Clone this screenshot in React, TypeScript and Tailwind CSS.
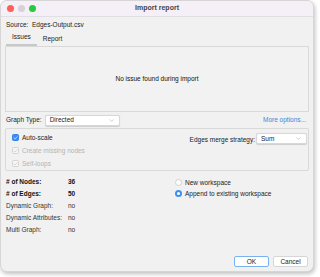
import { ChevronDown, Check } from "lucide-react"

const font = "font-['Helvetica','Liberation_Sans',Arial,sans-serif]"

const Select = ({ value, className }: { value: string; className: string }) => (
  <div className={`flex items-center justify-between bg-white rounded-[2px] border border-[#d8d8d8] shadow-[0_0.5px_1px_rgba(0,0,0,0.15)] pl-[4px] pr-[4px] ${className}`}>
    <span className="text-[6.5px] text-[#222]">{value}</span>
    <ChevronDown size={7} strokeWidth={1.6} className="text-[#9a9a9a]" />
  </div>
)

const CheckRow = ({ label, checked, disabled }: { label: string; checked?: boolean; disabled?: boolean }) => (
  <div className="flex items-center gap-[3px] h-[13px]">
    <div
      className={`w-[7px] h-[7px] rounded-[1.5px] flex items-center justify-center ${
        disabled ? "border border-[#d4d4d4] bg-[#f6f6f6]" : "bg-[#3d8ef7] border border-[#3584ea]"
      }`}
    >
      {checked && <Check size={6} strokeWidth={3} className={disabled ? "text-[#c0c0c0]" : "text-white"} />}
    </div>
    <span className={`text-[6.5px] ${disabled ? "text-[#b4b4b4]" : "text-[#222]"}`}>{label}</span>
  </div>
)

const Radio = ({ label, selected }: { label: string; selected?: boolean }) => (
  <div className="flex items-center gap-[3px] h-[11px]">
    <div
      className={`w-[7px] h-[7px] rounded-full flex items-center justify-center ${
        selected ? "bg-[#3d8ef7]" : "bg-white border border-[#cfcfcf]"
      }`}
    >
      {selected && <div className="w-[2.5px] h-[2.5px] rounded-full bg-white" />}
    </div>
    <span className="text-[6.5px] text-[#222]">{label}</span>
  </div>
)

const Stat = ({ label, value, bold }: { label: string; value: string; bold?: boolean }) => (
  <div className={`flex items-center h-[12px] text-[6.5px] ${bold ? "font-bold text-[#111]" : "text-[#333]"}`}>
    <span className="w-[62px]">{label}</span>
    <span>{value}</span>
  </div>
)

export default function App() {
  return (
    <div className={`w-[320px] h-[277px] bg-white overflow-hidden ${font}`}>
      <div className="w-[314px] h-[272px] rounded-[7px] bg-[#f1f1f1] border border-[#d6d6d6] shadow-[1px_2px_4px_rgba(0,0,0,0.25)] overflow-hidden flex flex-col">
        {/* title bar */}
        <div className="relative h-[16px] bg-[#f5eff7] border-b border-[#e2dfe3] flex items-center">
          <div className="flex gap-[4px] pl-[6px]">
            <div className="w-[7px] h-[7px] rounded-full bg-[#fe5f57]" />
            <div className="w-[7px] h-[7px] rounded-full bg-[#d6d2d8]" />
            <div className="w-[7px] h-[7px] rounded-full bg-[#2ac840]" />
          </div>
          <span className="absolute left-0 right-0 text-center text-[7px] font-bold text-[#444]">Import report</span>
        </div>

        <div className="flex-1 flex flex-col px-[4px]">
          <div className="h-[15px] flex items-center pl-[1px] text-[6.5px] text-[#222]">
            Source:&nbsp;&nbsp;Edges-Output.csv
          </div>

          {/* tabs */}
          <div className="flex h-[14px] items-end pl-[1px] gap-[0px] text-[6.5px] text-[#222]">
            <div className="px-[6px] pb-[2px] border-b-[2px] border-[#c8c8c8]">Issues</div>
            <div className="px-[6px] pb-[2px]">Report</div>
          </div>

          <div className="h-[66px] border border-[#d9d9d9] bg-[#f2f2f2] flex items-center justify-center text-[6.5px] text-[#111]">
            No issue found during import
          </div>

          {/* graph type */}
          <div className="flex items-center h-[16px]">
            <span className="text-[6.5px] text-[#222] pl-[1px]">Graph Type:</span>
            <Select value="Directed" className="ml-[3px] w-[75px] h-[11px]" />
            <span className="ml-auto mr-[3px] text-[6.5px] text-[#3f86d6]">More options...</span>
          </div>

          {/* options group */}
          <div className="h-[43px] border border-[#d9d9d9] rounded-[2px] flex px-[6px] pt-[2px]">
            <div className="flex flex-col">
              <CheckRow label="Auto-scale" checked />
              <CheckRow label="Create missing nodes" checked disabled />
              <CheckRow label="Self-loops" checked disabled />
            </div>
            <div className="ml-auto flex items-start pt-[2px] -mr-[5px]">
              <span className="text-[6.5px] text-[#222] mt-[2px] mr-[1px]">Edges merge strategy:</span>
              <Select value="Sum" className="w-[51px] h-[11px]" />
            </div>
          </div>

          {/* stats + workspace */}
          <div className="flex mt-[5px] pl-[1px]">
            <div className="flex flex-col w-[169px]">
              <Stat label="# of Nodes:" value="36" bold />
              <Stat label="# of Edges:" value="50" bold />
              <Stat label="Dynamic Graph:" value="no" />
              <Stat label="Dynamic Attributes:" value="no" />
              <Stat label="Multi Graph:" value="no" />
            </div>
            <div className="flex flex-col pt-[1px]">
              <Radio label="New workspace" />
              <Radio label="Append to existing workspace" selected />
            </div>
          </div>

          {/* buttons */}
          <div className="mt-auto mb-[4px] flex justify-end gap-[4px] pr-[1px]">
            <button className="w-[35px] h-[11px] bg-white rounded-[2px] border border-[#7cb1f0] text-[6.5px] text-[#222]">OK</button>
            <button className="w-[35px] h-[11px] bg-white rounded-[2px] border border-[#d6d6d6] text-[6.5px] text-[#222]">Cancel</button>
          </div>
        </div>
      </div>
    </div>
  )
}
